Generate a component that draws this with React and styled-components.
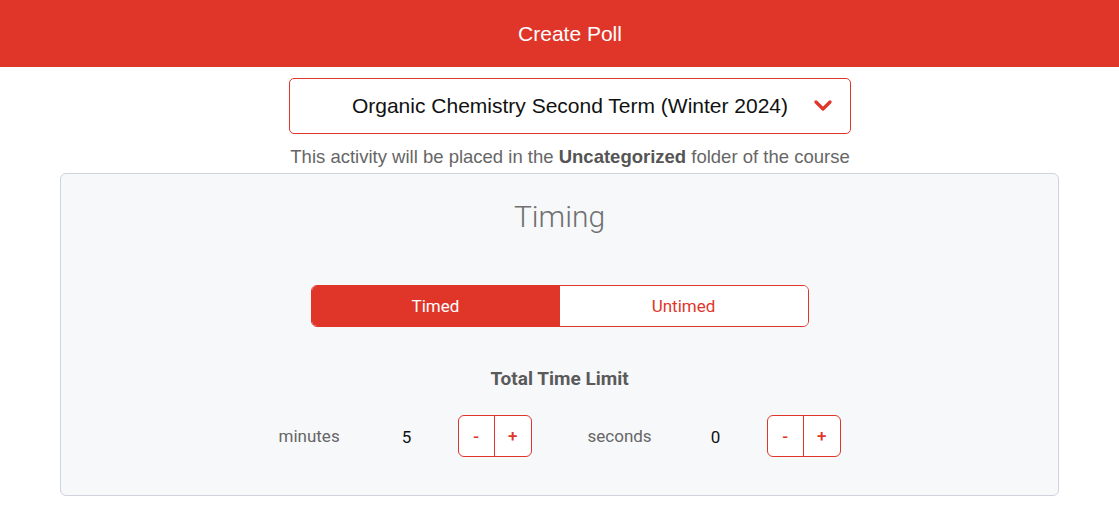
import React from 'react';
import styled, { createGlobalStyle } from 'styled-components';

const red = '#e0362a';

const Global = createGlobalStyle`
  body {
    margin: 0;
    background: #fff;
    font-family: "Liberation Sans", Arial, sans-serif;
  }
`

const Header = styled.div`
  height: 67px;
  background: ${red};
  color: #fff;
  font-size: 21px;
  line-height: 67px;
  text-align: center;
  padding-left: 21px;
`
const Top = styled.div`
  display: flex;
  flex-direction: column;
  align-items: center;
  padding-left: 21px;
`
const Select = styled.div`
  position: relative;
  box-sizing: border-box;
  width: 562px;
  height: 56px;
  margin-top: 11px;
  border: 1px solid ${red};
  border-radius: 5px;
  display: flex;
  align-items: center;
  justify-content: center;
  font-size: 21px;
  color: #111;
`
const Chevron = styled.svg`
  position: absolute;
  right: 18px;
  top: 21px;
`
const Note = styled.div`
  margin-top: 12px;
  font-size: 18.5px;
  line-height: 22px;
  color: #666;
  b { color: #555; }
`
const Card = styled.div`
  margin: 5px 60px 0;
  border: 1px solid #cfd4dc;
  border-radius: 6px;
  background: #f7f8fa;
  padding: 25px 0 38px;
  display: flex;
  flex-direction: column;
  align-items: center;
  font-family: Roboto, "Liberation Sans", sans-serif;
`
const Title = styled.div`
  font-size: 30px;
  font-weight: 300;
  line-height: 36px;
  color: #707070;
`
const Toggle = styled.div`
  margin-top: 50px;
  display: flex;
  width: 498px;
  height: 42px;
  box-sizing: border-box;
  border: 1px solid ${red};
  border-radius: 6px;
  overflow: hidden;
`
const Option = styled.div`
  flex: 1;
  display: flex;
  align-items: center;
  justify-content: center;
  font-size: 17px;
  background: ${({ active }) => (active ? red : '#fff')};
  color: ${({ active }) => (active ? '#fff' : red)};
`
const Subhead = styled.div`
  margin-top: 41px;
  font-size: 19px;
  line-height: 22px;
  font-weight: 700;
  color: #5a5a5a;
`
const Row = styled.div`
  margin-top: 25px;
  display: flex;
  gap: 56px;
`
const Group = styled.div`
  display: flex;
  align-items: center;
`
const Label = styled.div`
  width: 100px;
  font-size: 17px;
  color: #666;
`
const Value = styled.div`
  width: 56px;
  margin-right: 23px;
  text-align: center;
  font-size: 17px;
  color: #111;
  padding-top: 2px;
`
const Stepper = styled.div`
  display: flex;
  width: 74px;
  height: 42px;
  box-sizing: border-box;
  border: 1px solid ${red};
  border-radius: 6px;
  background: #fff;
  overflow: hidden;
`
const Step = styled.div`
  flex: 1;
  display: flex;
  align-items: center;
  justify-content: center;
  color: ${red};
  font-size: 17px;
  font-weight: 500;
  & + & { border-left: 1px solid ${red}; }
`

const TimeField = ({ label, value }) => (
  <Group>
    <Label>{label}</Label>
    <Value>{value}</Value>
    <Stepper>
      <Step>-</Step>
      <Step>+</Step>
    </Stepper>
  </Group>
)

export default function App() {
  return (
    <>
      <Global />
      <Header>Create Poll</Header>
      <Top>
        <Select>
          Organic Chemistry Second Term (Winter 2024)
          <Chevron width="18" height="12" viewBox="0 0 18 12">
            <path d="M2 2 L9 9 L16 2" fill="none" stroke={red} strokeWidth="3.2" strokeLinecap="round" strokeLinejoin="round" />
          </Chevron>
        </Select>
        <Note>
          This activity will be placed in the <b>Uncategorized</b> folder of the course
        </Note>
      </Top>
      <Card>
        <Title>Timing</Title>
        <Toggle>
          <Option active>Timed</Option>
          <Option>Untimed</Option>
        </Toggle>
        <Subhead>Total Time Limit</Subhead>
        <Row>
          <TimeField label="minutes" value="5" />
          <TimeField label="seconds" value="0" />
        </Row>
      </Card>
    </>
  );
}
